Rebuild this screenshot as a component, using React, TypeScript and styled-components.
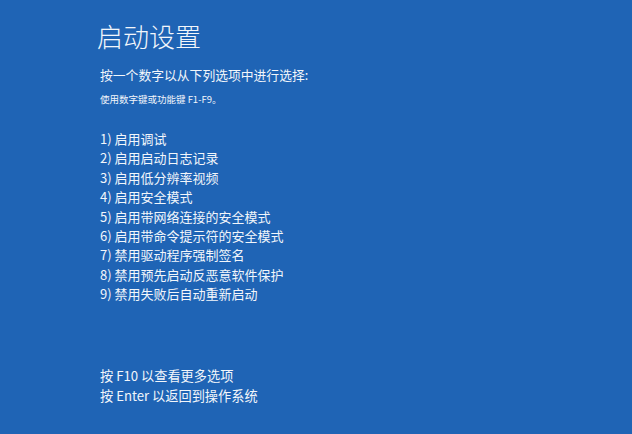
import styled, { createGlobalStyle } from 'styled-components'

const GlobalStyle = createGlobalStyle`
  html, body {
    margin: 0;
    padding: 0;
    background: #1f64b5;
  }
  body {
    font-family: "Noto Sans CJK SC", "Noto Sans", sans-serif;
    -webkit-font-smoothing: antialiased;
  }
`

const Screen = styled.div`
  width: 632px;
  height: 434px;
  box-sizing: border-box;
  background: #1f64b5;
  color: #f2f6fb;
  padding: 17px 0 0 97px;
  display: flex;
  flex-direction: column;
  overflow: hidden;
`

const Title = styled.h1`
  margin: 0;
  font-size: 26px;
  font-weight: 300;
  line-height: 38px;
`

const Prompt = styled.p`
  margin: 11px 0 0 3px;
  font-size: 12.8px;
  line-height: 18px;
`

const Hint = styled.p`
  margin: 9px 0 0 3px;
  font-size: 9.5px;
  line-height: 12px;
`

const OptionList = styled.ol`
  list-style: none;
  margin: 24px 0 0 3px;
  padding: 0;
  display: flex;
  flex-direction: column;
`

const Option = styled.li`
  font-size: 13px;
  line-height: 19.4px;
  white-space: nowrap;
`

const Footer = styled.div`
  margin: 62px 0 0 3px;
  display: flex;
  flex-direction: column;
`

const FooterLine = styled.div`
  font-size: 13.2px;
  line-height: 20px;
  white-space: nowrap;
`

const options = [
  '启用调试',
  '启用启动日志记录',
  '启用低分辨率视频',
  '启用安全模式',
  '启用带网络连接的安全模式',
  '启用带命令提示符的安全模式',
  '禁用驱动程序强制签名',
  '禁用预先启动反恶意软件保护',
  '禁用失败后自动重新启动',
]

const App = () => {
  return (
    <>
      <GlobalStyle />
      <Screen>
        <Title>启动设置</Title>
        <Prompt>按一个数字以从下列选项中进行选择:</Prompt>
        <Hint>使用数字键或功能键 F1-F9。</Hint>
        <OptionList>
          {options.map((text, i) => (
            <Option key={text}>
              {i + 1}) {text}
            </Option>
          ))}
        </OptionList>
        <Footer>
          <FooterLine>按 F10 以查看更多选项</FooterLine>
          <FooterLine>按 Enter 以返回到操作系统</FooterLine>
        </Footer>
      </Screen>
    </>
  )
}

export default App
